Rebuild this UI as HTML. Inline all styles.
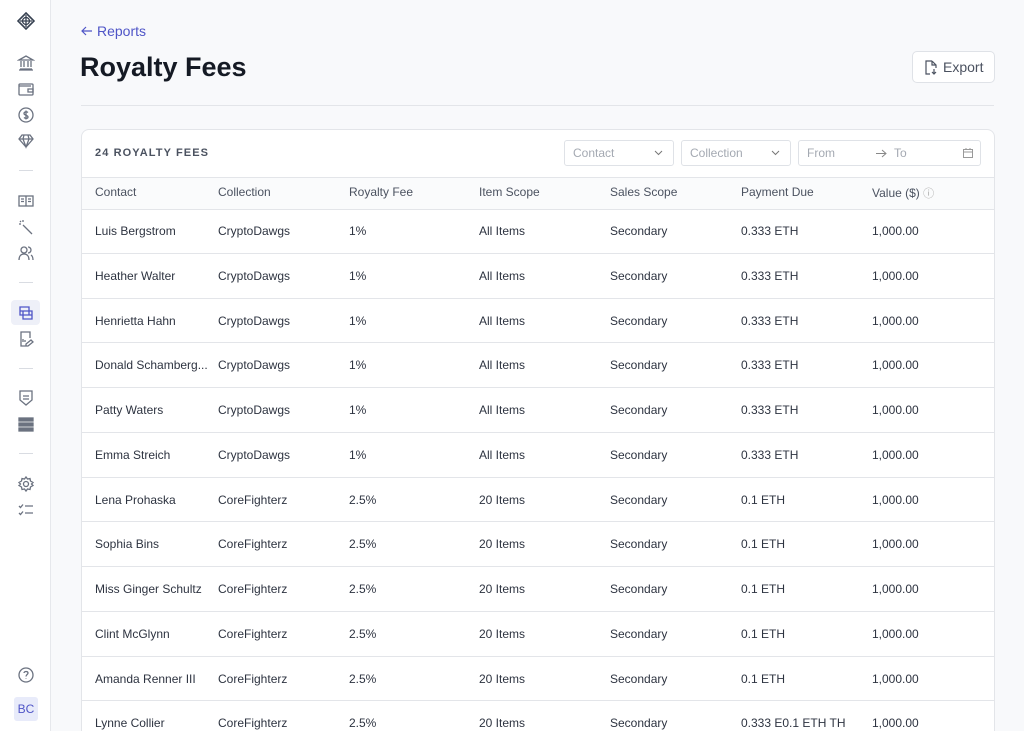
<!DOCTYPE html>
<html style="width:1024px;height:731px;overflow:hidden"><head><meta charset="utf-8"><style>
*{box-sizing:border-box;margin:0;padding:0}
body{width:1024px;height:731px;overflow:hidden;background:#f8f9fb;font-family:"Liberation Sans",sans-serif;color:#2d3340;position:relative}
.sb{position:absolute;left:0;top:0;width:51px;height:731px;background:#fff;border-right:1px solid #e6e8ec}
.ic{position:absolute;left:17px;width:18px;height:18px}
.ic svg{width:18px;height:18px;fill:none;stroke:#6b7280;stroke-width:1.3}
.sep{position:absolute;left:19px;width:14px;border-top:1px solid #d9dce2}
.act{position:absolute;left:11px;top:300px;width:29px;height:25px;background:#eef0f8;border-radius:4px}
.bc{position:absolute;left:14px;top:697px;width:24px;height:24px;background:#e8ebfa;color:#4f55c7;font-size:12px;text-align:center;line-height:24px;border-radius:3px}
.back{position:absolute;left:81px;top:23px;color:#4f55c7;font-size:14px}
h1{position:absolute;left:80px;top:52px;font-size:27px;font-weight:bold;color:#151a24}
.exp{position:absolute;left:912px;top:51px;width:83px;height:32px;background:#fff;border:1px solid #dfe2e7;border-radius:5px;font-size:14px;color:#4b5260;line-height:30px;padding-left:30px}
.hr{position:absolute;left:81px;top:105px;width:913px;border-top:1px solid #e3e5e9}
.card{position:absolute;left:81px;top:129px;width:914px;height:602px;background:#fff;border:1px solid #e3e5e9;border-bottom:none;border-radius:8px 8px 0 0;overflow:hidden}
.ttl{position:absolute;left:13px;top:17px;font-size:11px;font-weight:bold;letter-spacing:1.1px;color:#4b5260}
.sel{position:absolute;top:10px;height:26px;border:1px solid #dfe2e7;border-radius:3px;font-size:12px;color:#a4a9b2;line-height:24px;padding-left:8px}
.thead{position:absolute;left:0;top:47px;width:914px;height:33px;border-top:1px solid #e3e5e9;border-bottom:1px solid #e3e5e9;background:#fafbfc}
.c{position:absolute;font-size:12px;color:#2d3340}
.thead .c{top:7px;color:#4b5260}
.row{position:absolute;left:0;width:914px;height:44.75px;border-bottom:1px solid #e3e5e9}
.row .c{top:15px}
</style></head><body>
<div class="sb">
<div class="ic" style="top:12px"><svg viewBox="0 0 18 18"><path d="M9 1L17 9L9 17L1 9Z" stroke="#374151" stroke-width="1.6"/><circle cx="9" cy="9" r="3.5" stroke="#374151"/><path d="M9 3V15M3 9H15" stroke="#374151"/></svg></div>
<div class="ic" style="top:54px"><svg viewBox="0 0 18 18"><path d="M2 6L9 2L16 6H2ZM3 15H15M4 7V13M7 7V13M11 7V13M14 7V13M2 16H16"/></svg></div>
<div class="ic" style="top:80px"><svg viewBox="0 0 18 18"><rect x="2" y="4" width="14" height="11" rx="1"/><path d="M2 6H14M11 9H16V12H11Z"/></svg></div>
<div class="ic" style="top:106px"><svg viewBox="0 0 18 18"><circle cx="9" cy="9" r="7"/><path d="M11 6.5C10 5.5 7 5.5 7 7.5S11 9 11 11S8 12.5 7 11.5M9 4.5V13.5"/></svg></div>
<div class="ic" style="top:132px"><svg viewBox="0 0 18 18"><path d="M5 3H13L16 7L9 15L2 7ZM2 7H16M7 3L6 7L9 15L12 7L11 3"/></svg></div>
<div class="sep" style="top:170px"></div>
<div class="ic" style="top:192px"><svg viewBox="0 0 18 18"><rect x="2" y="4" width="14" height="10"/><path d="M9 4V14M4 7H7M4 9.5H7M11 7H14M11 9.5H14"/></svg></div>
<div class="ic" style="top:218px"><svg viewBox="0 0 18 18"><path d="M6 7L15 16M3 3L4 4M6 2V4M2 6H4"/></svg></div>
<div class="ic" style="top:244px"><svg viewBox="0 0 18 18"><circle cx="7" cy="6" r="3"/><path d="M2 16C2 12 4 10 7 10S12 12 12 16M11 3A3 3 0 0 1 11 9M14 11C15.5 12 16 14 16 16"/></svg></div>
<div class="sep" style="top:282px"></div>
<div class="act"></div>
<div class="ic" style="top:304px"><svg viewBox="0 0 18 18"><path d="M3 3H12V7H15V15H6V11H3ZM3 7H12V11H6V7M6 11V15M12 11H15" stroke="#4f55c7"/></svg></div>
<div class="ic" style="top:330px"><svg viewBox="0 0 18 18"><path d="M13 8V2H4V16H9M6 12V9M8 12V10M14 10L16 12L11 16H9V14Z"/></svg></div>
<div class="sep" style="top:368px"></div>
<div class="ic" style="top:389px"><svg viewBox="0 0 18 18"><path d="M3 2H15V11L9 16L3 11ZM6 7H12M6 10H12"/></svg></div>
<div class="ic" style="top:415px"><svg viewBox="0 0 18 18"><rect x="2" y="3" width="14" height="3" fill="#6b7280"/><rect x="2" y="8" width="14" height="3" fill="#6b7280"/><rect x="2" y="13" width="14" height="3" fill="#6b7280"/></svg></div>
<div class="sep" style="top:453px"></div>
<div class="ic" style="top:475px"><svg viewBox="0 0 18 18"><circle cx="9" cy="9" r="2.5"/><path d="M9 2L10.5 4L13 3.5L13.5 6L16 7.5L14.5 9L16 10.5L13.5 12L13 14.5L10.5 14L9 16L7.5 14L5 14.5L4.5 12L2 10.5L3.5 9L2 7.5L4.5 6L5 3.5L7.5 4Z"/></svg></div>
<div class="ic" style="top:501px"><svg viewBox="0 0 18 18"><path d="M2 5L3.5 6.5L6 3.5M2 12L3.5 13.5L6 10.5M8 5H16M8 12H16"/></svg></div>
<div class="ic" style="top:666px"><svg viewBox="0 0 18 18"><circle cx="9" cy="9" r="7"/><path d="M7 7C7 5 11 5 11 7C11 8.5 9 8.5 9 10.5M9 12.5V13"/></svg></div>
<div class="bc">BC</div>
</div>
<div class="back"><svg width="12" height="10" viewBox="0 0 12 10" style="vertical-align:0;margin-right:4px" fill="none" stroke="#4f55c7" stroke-width="1.2"><path d="M11 5H1M5 1L1 5L5 9"/></svg>Reports</div>
<h1>Royalty Fees</h1>
<div class="exp"><svg style="position:absolute;left:11px;top:8px" width="14" height="15" viewBox="0 0 14 15" fill="none" stroke="#4b5260" stroke-width="1.2"><path d="M8 1H2V14H6M8 1L12 5V8M8 1V5H12M10 9V14M8 12L10 14L12 12"/></svg>Export</div>
<div class="hr"></div>
<div class="card">
<div class="ttl">24 ROYALTY FEES</div>
<div class="sel" style="left:482px;width:110px">Contact<svg style="position:absolute;right:10px;top:9px" width="9" height="6" viewBox="0 0 9 6" fill="none" stroke="#777"><path d="M1 1L4.5 4.5L8 1"/></svg></div>
<div class="sel" style="left:599px;width:110px">Collection<svg style="position:absolute;right:10px;top:9px" width="9" height="6" viewBox="0 0 9 6" fill="none" stroke="#777"><path d="M1 1L4.5 4.5L8 1"/></svg></div>
<div class="sel" style="left:716px;width:183px">From<svg style="position:absolute;left:77px;top:8px" width="11" height="9" viewBox="0 0 11 9" fill="none" stroke="#888"><path d="M0 4.5H10M6 1L10 4.5L6 8"/></svg><span style="position:absolute;left:95px">To</span><svg style="position:absolute;right:7px;top:7px" width="10" height="10" viewBox="0 0 10 10" fill="none" stroke="#999"><rect x="0.5" y="1.5" width="9" height="8"/><path d="M0.5 4H9.5M3 0V2M7 0V2"/></svg></div>
<div class="thead">
<div class="c" style="left:13px">Contact</div><div class="c" style="left:136px">Collection</div><div class="c" style="left:267px">Royalty Fee</div><div class="c" style="left:397px">Item Scope</div><div class="c" style="left:528px">Sales Scope</div><div class="c" style="left:659px">Payment Due</div><div class="c" style="left:790px">Value ($) <span style="color:#aaa;font-size:11px">ⓘ</span></div>
</div>
<div class="row" style="top:79px"><div class="c" style="left:13px">Luis Bergstrom</div><div class="c" style="left:136px">CryptoDawgs</div><div class="c" style="left:267px">1%</div><div class="c" style="left:397px">All Items</div><div class="c" style="left:528px">Secondary</div><div class="c" style="left:659px">0.333 ETH</div><div class="c" style="left:790px">1,000.00</div></div>
<div class="row" style="top:123.75px"><div class="c" style="left:13px">Heather Walter</div><div class="c" style="left:136px">CryptoDawgs</div><div class="c" style="left:267px">1%</div><div class="c" style="left:397px">All Items</div><div class="c" style="left:528px">Secondary</div><div class="c" style="left:659px">0.333 ETH</div><div class="c" style="left:790px">1,000.00</div></div>
<div class="row" style="top:168.5px"><div class="c" style="left:13px">Henrietta Hahn</div><div class="c" style="left:136px">CryptoDawgs</div><div class="c" style="left:267px">1%</div><div class="c" style="left:397px">All Items</div><div class="c" style="left:528px">Secondary</div><div class="c" style="left:659px">0.333 ETH</div><div class="c" style="left:790px">1,000.00</div></div>
<div class="row" style="top:213.25px"><div class="c" style="left:13px">Donald Schamberg...</div><div class="c" style="left:136px">CryptoDawgs</div><div class="c" style="left:267px">1%</div><div class="c" style="left:397px">All Items</div><div class="c" style="left:528px">Secondary</div><div class="c" style="left:659px">0.333 ETH</div><div class="c" style="left:790px">1,000.00</div></div>
<div class="row" style="top:258px"><div class="c" style="left:13px">Patty Waters</div><div class="c" style="left:136px">CryptoDawgs</div><div class="c" style="left:267px">1%</div><div class="c" style="left:397px">All Items</div><div class="c" style="left:528px">Secondary</div><div class="c" style="left:659px">0.333 ETH</div><div class="c" style="left:790px">1,000.00</div></div>
<div class="row" style="top:302.75px"><div class="c" style="left:13px">Emma Streich</div><div class="c" style="left:136px">CryptoDawgs</div><div class="c" style="left:267px">1%</div><div class="c" style="left:397px">All Items</div><div class="c" style="left:528px">Secondary</div><div class="c" style="left:659px">0.333 ETH</div><div class="c" style="left:790px">1,000.00</div></div>
<div class="row" style="top:347.5px"><div class="c" style="left:13px">Lena Prohaska</div><div class="c" style="left:136px">CoreFighterz</div><div class="c" style="left:267px">2.5%</div><div class="c" style="left:397px">20 Items</div><div class="c" style="left:528px">Secondary</div><div class="c" style="left:659px">0.1 ETH</div><div class="c" style="left:790px">1,000.00</div></div>
<div class="row" style="top:392.25px"><div class="c" style="left:13px">Sophia Bins</div><div class="c" style="left:136px">CoreFighterz</div><div class="c" style="left:267px">2.5%</div><div class="c" style="left:397px">20 Items</div><div class="c" style="left:528px">Secondary</div><div class="c" style="left:659px">0.1 ETH</div><div class="c" style="left:790px">1,000.00</div></div>
<div class="row" style="top:437px"><div class="c" style="left:13px">Miss Ginger Schultz</div><div class="c" style="left:136px">CoreFighterz</div><div class="c" style="left:267px">2.5%</div><div class="c" style="left:397px">20 Items</div><div class="c" style="left:528px">Secondary</div><div class="c" style="left:659px">0.1 ETH</div><div class="c" style="left:790px">1,000.00</div></div>
<div class="row" style="top:481.75px"><div class="c" style="left:13px">Clint McGlynn</div><div class="c" style="left:136px">CoreFighterz</div><div class="c" style="left:267px">2.5%</div><div class="c" style="left:397px">20 Items</div><div class="c" style="left:528px">Secondary</div><div class="c" style="left:659px">0.1 ETH</div><div class="c" style="left:790px">1,000.00</div></div>
<div class="row" style="top:526.5px"><div class="c" style="left:13px">Amanda Renner III</div><div class="c" style="left:136px">CoreFighterz</div><div class="c" style="left:267px">2.5%</div><div class="c" style="left:397px">20 Items</div><div class="c" style="left:528px">Secondary</div><div class="c" style="left:659px">0.1 ETH</div><div class="c" style="left:790px">1,000.00</div></div>
<div class="row" style="top:571.25px;height:30px;border-bottom:none"><div class="c" style="left:13px">Lynne Collier</div><div class="c" style="left:136px">CoreFighterz</div><div class="c" style="left:267px">2.5%</div><div class="c" style="left:397px">20 Items</div><div class="c" style="left:528px">Secondary</div><div class="c" style="left:659px">0.333 E0.1 ETH TH</div><div class="c" style="left:790px">1,000.00</div></div>
</div>
</body></html>
